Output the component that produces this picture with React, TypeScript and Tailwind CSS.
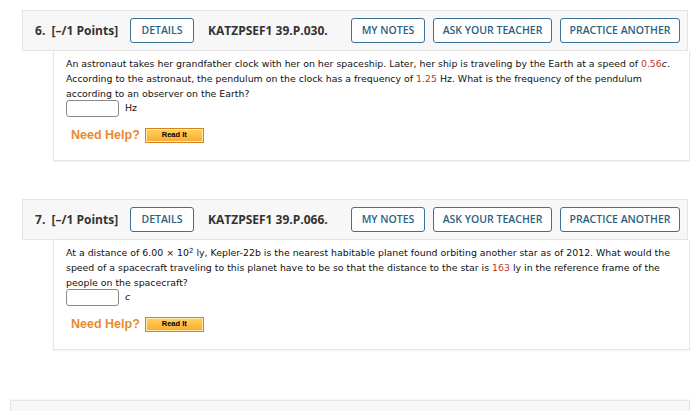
import React from 'react';

const sans = { fontFamily: '"Open Sans", "Liberation Sans", sans-serif' };
const verdana = { fontFamily: '"DejaVu Sans", Verdana, sans-serif' };

const HeaderButton = ({ label, w }: { label: string; w: string }) => (
    <button
        className={`h-[25px] ${w} shrink-0 rounded-[3px] border-[1.5px] border-[#3b7196] bg-white text-[10.5px] font-semibold text-[#2c5f82]`}
        style={sans}
    >
        {label}
    </button>
);

const Red = ({ children }: { children: React.ReactNode }) => (
    <span className="text-[#c8312c]">{children}</span>
);

const NeedHelp = () => (
    <div className="ml-[5px] mt-[10px] flex h-[16px] items-center gap-[5px]">
        <span
            className="text-[12.5px] font-bold text-[#e98a2d]"
            style={{ fontFamily: '"Liberation Sans", Arial, sans-serif' }}
        >
            Need Help?
        </span>
        <button
            className="flex h-[15px] w-[59px] items-center justify-center border border-[#d9811f] bg-gradient-to-b from-[#ffd35c] to-[#f8a934] text-[7.5px] font-bold text-black shadow-[inset_0_0_0_1px_#ffe9a6]"
            style={{ fontFamily: '"Liberation Sans", Arial, sans-serif' }}
        >
            Read It
        </button>
    </div>
);

interface QuestionProps {
    num: number;
    code: string;
    unit: React.ReactNode;
    children: React.ReactNode;
}

const Question = ({ num, code, unit, children }: QuestionProps) => (
    <div className="ml-[22px] mr-[12px]">
        {/* Header */}
        <div className="flex h-[41px] items-center border border-[#e4e4e4] bg-[#f7f7f7] pl-[12px] pr-[7px]">
            <span className="w-[95px] shrink-0 text-[12px] font-bold text-[#333]" style={sans}>
                {num}.&nbsp; [–/1 Points]
            </span>
            <HeaderButton label="DETAILS" w="w-[64px]" />
            <span className="ml-[14px] text-[12px] font-bold text-[#333]" style={sans}>
                {code}
            </span>
            <div className="ml-auto flex gap-[8px]">
                <HeaderButton label="MY NOTES" w="w-[74px]" />
                <HeaderButton label="ASK YOUR TEACHER" w="w-[119px]" />
                <HeaderButton label="PRACTICE ANOTHER" w="w-[120px]" />
            </div>
        </div>
        {/* Body */}
        <div className="ml-[31px] mr-[-2px] border-x border-b border-[#e6e6e6] bg-white pb-[17px] pl-[12px] pr-[8px] pt-[5px] shadow-[0_1px_2px_rgba(0,0,0,0.06)]">
            <p className="whitespace-nowrap text-[9.4px] leading-[15px] text-[#111]" style={verdana}>
                {children}
            </p>
            <div className="mt-[-1px] flex items-center gap-[6px]">
                <div className="h-[17px] w-[53px] rounded-[3px] border border-[#8a8a8a] bg-white" />
                <span className="text-[9.4px] text-[#111]" style={verdana}>
                    {unit}
                </span>
            </div>
            <NeedHelp />
        </div>
    </div>
);

export default function App() {
    return (
        <div className="h-[411px] w-[700px] overflow-hidden bg-white pt-[10px]">
            <Question num={6} code="KATZPSEF1 39.P.030." unit="Hz">
                An astronaut takes her grandfather clock with her on her spaceship. Later, her ship is
                traveling by the Earth at a speed of <Red>0.56</Red>
                <i>c</i>.
                <br />
                According to the astronaut, the pendulum on the clock has a frequency of <Red>1.25</Red>{' '}
                Hz. What is the frequency of the pendulum
                <br />
                according to an observer on the Earth?
            </Question>

            <div className="h-[38px]" />

            <Question num={7} code="KATZPSEF1 39.P.066." unit={<i>c</i>}>
                At a distance of 6.00 × 10
                <sup className="text-[7px]">2</sup> ly, Kepler-22b is the nearest habitable planet found
                orbiting another star as of 2012. What would the
                <br />
                speed of a spacecraft traveling to this planet have to be so that the distance to the star
                is <Red>163</Red> ly in the reference frame of the
                <br />
                people on the spacecraft?
            </Question>

            {/* Next card peeking in */}
            <div className="ml-[10px] mr-[10px] mt-[50px] h-[20px] border border-[#e4e4e4] bg-[#f7f7f7] shadow-[0_-1px_2px_rgba(0,0,0,0.05)]" />
        </div>
    );
}
